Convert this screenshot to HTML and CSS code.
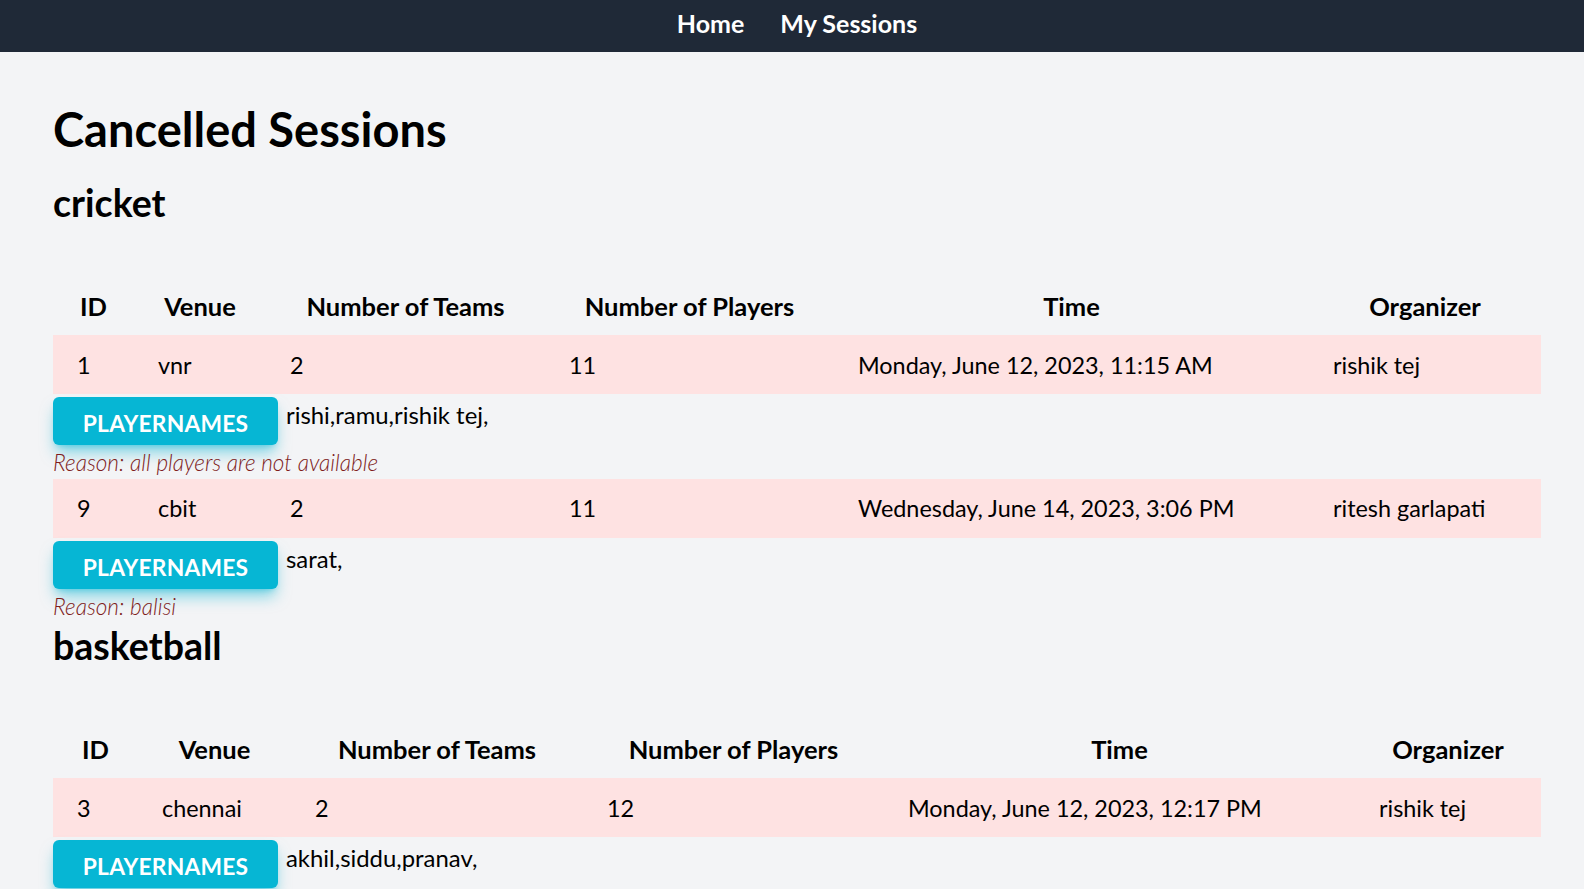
FILE: index.html
```html
<!DOCTYPE html>
<html lang="en">
<head>
<meta charset="utf-8">
<title>Cancelled Sessions</title>
<link rel="stylesheet" href="styles.css">
</head>
<body>
<nav class="topbar">
  <a class="topbar-link" href="#">Home</a>
  <a class="topbar-link" href="#">My Sessions</a>
</nav>
<main class="page">
  <h1 class="page-title">Cancelled Sessions</h1>

  <section class="sport">
    <h2 class="sport-name">cricket</h2>
    <table class="sessions">
      <colgroup>
        <col class="c-id-a"><col class="c-venue-a"><col class="c-teams-a"><col class="c-players-a"><col class="c-time-a"><col class="c-org-a">
      </colgroup>
      <thead>
        <tr><th>ID</th><th>Venue</th><th>Number of Teams</th><th>Number of Players</th><th>Time</th><th>Organizer</th></tr>
      </thead>
      <tbody>
        <tr class="session-row"><td>1</td><td>vnr</td><td>2</td><td>11</td><td>Monday, June 12, 2023, 11:15 AM</td><td>rishik tej</td></tr>
        <tr class="detail-row"><td colspan="6">
          <div class="players"><button class="players-btn" type="button">PLAYERNAMES</button><span class="players-list">rishi,ramu,rishik tej,</span></div>
          <p class="reason">Reason: all players are not available</p>
        </td></tr>
        <tr class="session-row"><td>9</td><td>cbit</td><td>2</td><td>11</td><td>Wednesday, June 14, 2023, 3:06 PM</td><td>ritesh garlapati</td></tr>
        <tr class="detail-row"><td colspan="6">
          <div class="players"><button class="players-btn" type="button">PLAYERNAMES</button><span class="players-list">sarat,</span></div>
          <p class="reason">Reason: balisi</p>
        </td></tr>
      </tbody>
    </table>
  </section>

  <section class="sport">
    <h2 class="sport-name">basketball</h2>
    <table class="sessions">
      <colgroup>
        <col class="c-id-b"><col class="c-venue-b"><col class="c-teams-b"><col class="c-players-b"><col class="c-time-b"><col class="c-org-b">
      </colgroup>
      <thead>
        <tr><th>ID</th><th>Venue</th><th>Number of Teams</th><th>Number of Players</th><th>Time</th><th>Organizer</th></tr>
      </thead>
      <tbody>
        <tr class="session-row"><td>3</td><td>chennai</td><td>2</td><td>12</td><td>Monday, June 12, 2023, 12:17 PM</td><td>rishik tej</td></tr>
        <tr class="detail-row"><td colspan="6">
          <div class="players"><button class="players-btn" type="button">PLAYERNAMES</button><span class="players-list">akhil,siddu,pranav,</span></div>
        </td></tr>
      </tbody>
    </table>
  </section>
</main>
</body>
</html>
```
FILE: styles.css
```css
* { box-sizing: border-box; }

html, body {
  margin: 0;
  padding: 0;
}

body {
  background: #f3f4f6;
  color: #000;
  font-family: Lato, "Noto Sans", sans-serif;
  overflow: hidden;
}

.topbar {
  height: 52px;
  background: #1f2937;
  display: flex;
  justify-content: center;
  align-items: center;
  gap: 36px;
  padding: 0 0 7px 10px;
}

.topbar-link {
  color: #fff;
  text-decoration: none;
  font-weight: 700;
  font-size: 25px;
  line-height: 28px;
}

.page {
  padding: 53px 43px 0 53px;
}

.page-title {
  margin: 0 0 32px;
  font-size: 47px;
  line-height: 48px;
  font-weight: 700;
}

.sport-name {
  margin: 6px 0 55px;
  font-size: 37.5px;
  line-height: 36px;
  font-weight: 700;
}

.sessions {
  width: 1488px;
  border-collapse: collapse;
  border-spacing: 0;
  table-layout: fixed;
}

.c-id-a { width: 81px; }
.c-venue-a { width: 132px; }
.c-teams-a { width: 279px; }
.c-players-a { width: 289px; }
.c-time-a { width: 475px; }
.c-org-a { width: 232px; }

.c-id-b { width: 85px; }
.c-venue-b { width: 153px; }
.c-teams-b { width: 292px; }
.c-players-b { width: 301px; }
.c-time-b { width: 471px; }
.c-org-b { width: 186px; }

.sessions th {
  height: 59px;
  padding: 0;
  text-align: center;
  font-size: 25.5px;
  line-height: 28px;
  font-weight: 700;
  white-space: nowrap;
}

.session-row {
  background: #fee2e2;
}

.session-row td {
  height: 59px;
  padding: 0 0 0 24px;
  font-size: 23.4px;
  line-height: 28px;
  white-space: nowrap;
}

.detail-row td {
  padding: 3px 0 3.5px;
}

.players {
  display: flex;
  align-items: flex-start;
  gap: 8px;
}

.players-btn {
  width: 225px;
  height: 48px;
  border: 0;
  border-radius: 6px;
  background: #06b6d4;
  color: #fff;
  font-family: Lato, "Noto Sans", sans-serif;
  font-weight: 700;
  font-size: 22.8px;
  letter-spacing: 0.2px;
  padding: 4px 0 0;
  box-shadow: 0 10px 15px -3px rgba(6, 182, 212, 0.5), 0 4px 6px -4px rgba(6, 182, 212, 0.5);
}

.players-list {
  font-size: 23.9px;
  line-height: 30px;
  margin-top: 3px;
}

.reason {
  margin: 6px 0 0;
  font-size: 22.6px;
  line-height: 24px;
  font-style: italic;
  font-weight: 300;
  color: #7f1d1d;
}
```
